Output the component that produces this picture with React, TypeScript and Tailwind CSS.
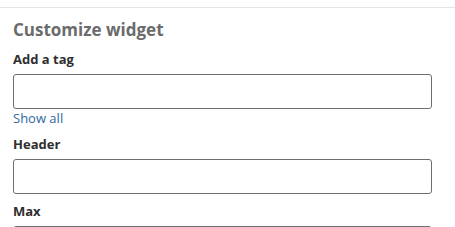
export default function App() {
  return (
    <div className="w-[455px] h-[227px] overflow-hidden bg-white" style={{ fontFamily: "'Open Sans', Lato, sans-serif" }}>
      <div className="mt-[7px] border-t border-[#e4e4e4] pl-[13px] pr-[23px] pt-[10px]">
        <h2 className="text-[17px] leading-[24px] font-bold text-[#6b6b6b]">Customize widget</h2>
        <div className="mt-[8px]">
          <label className="block text-[13px] leading-[18px] font-bold text-[#2e2e2e]">Add a tag</label>
          <input className="mt-[6px] block w-full h-[35px] rounded-[3px] border border-[#6e6e6e] bg-white outline-none" />
          <a className="block text-[13px] leading-[18px] text-[#2f6aa0]">Show all</a>
        </div>
        <div className="mt-[8px]">
          <label className="block text-[13px] leading-[18px] font-bold text-[#2e2e2e]">Header</label>
          <input className="mt-[6px] block w-full h-[35px] rounded-[3px] border border-[#6e6e6e] bg-white outline-none" />
        </div>
        <div className="mt-[8px]">
          <label className="block text-[13px] leading-[18px] font-bold text-[#2e2e2e]">Max</label>
          <input className="mt-[6px] block w-full h-[35px] rounded-[3px] border border-[#6e6e6e] bg-white outline-none" />
        </div>
      </div>
    </div>
  );
}
